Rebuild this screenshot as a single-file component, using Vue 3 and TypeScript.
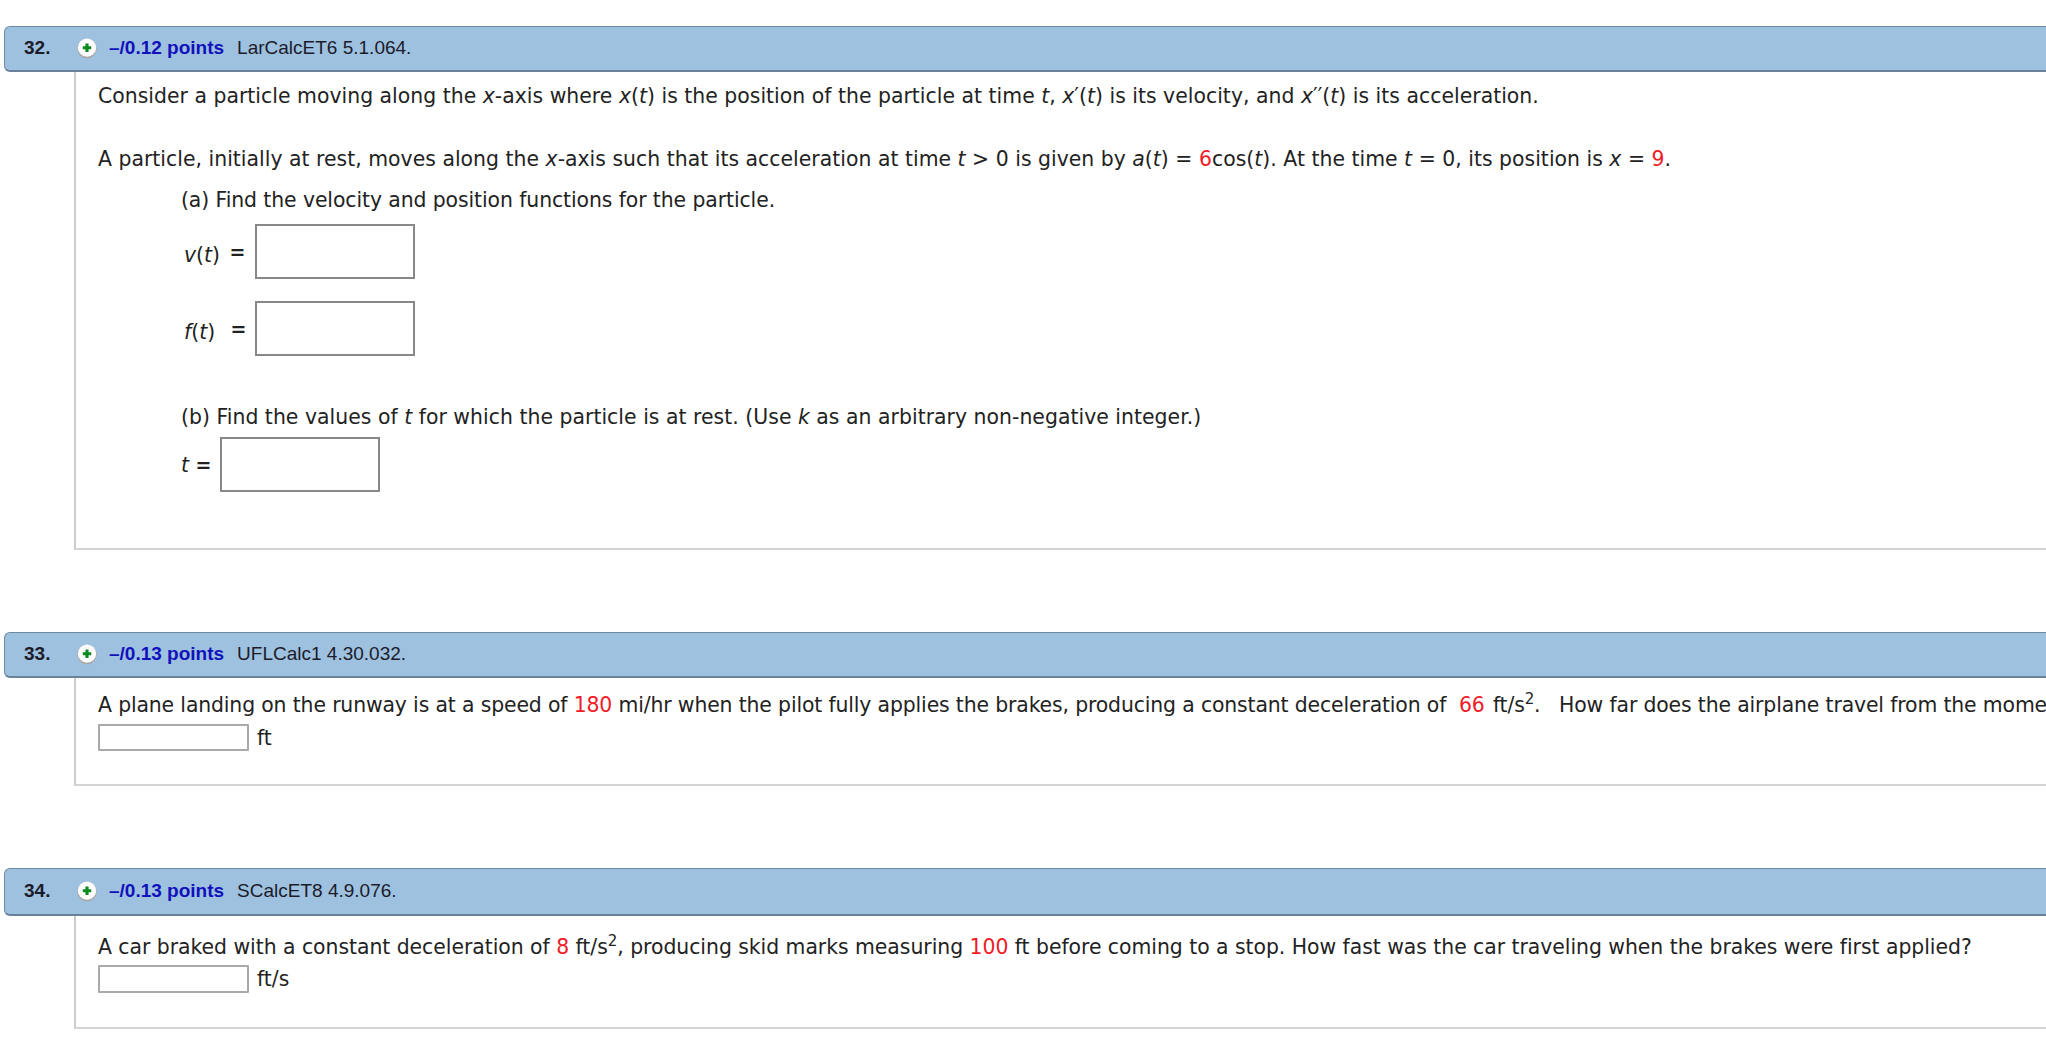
<template>
  <main class="page">
    <section class="question first">
      <header class="bar">
        <span class="num">32.</span>
        <svg class="plus" viewBox="0 0 24 24" aria-hidden="true">
          <circle cx="12" cy="12.6" r="10.6" fill="#a9a9a9" />
          <circle cx="12" cy="11.6" r="10" fill="#fdfdfd" />
          <path d="M12 7v9.4M7.4 11.7h9.2" stroke="#0d8a1f" stroke-width="3.4" fill="none" />
        </svg>
        <span class="pts">–/0.12 points</span>
        <span class="ref">LarCalcET6 5.1.064.</span>
      </header>
      <div class="body body-32">
        <p class="line first-line">Consider a particle moving along the <i>x</i>-axis where <i>x</i>(<i>t</i>) is the position of the particle at time <i>t</i>, <i>x</i>′(<i>t</i>) is its velocity, and <i>x</i>′′(<i>t</i>) is its acceleration.</p>
        <p class="line second">A particle, initially at rest, moves along the <i>x</i>-axis such that its acceleration at time <i>t</i> &gt; 0 is given by <i>a</i>(<i>t</i>) = <b class="red">6</b>cos(<i>t</i>). At the time <i>t</i> = 0, its position is <i>x</i> = <b class="red">9</b>.</p>
        <div class="part">
          <p class="line part-a">(a) Find the velocity and position functions for the particle.</p>
          <div class="answer v-row">
            <span class="label"><i>v</i>(<i>t</i>) <span class="eq">=</span></span>
            <input class="box" type="text" />
          </div>
          <div class="answer f-row">
            <span class="label"><i>f</i>(<i>t</i>) <span class="eq f-eq">=</span></span>
            <input class="box" type="text" />
          </div>
          <p class="line part-b">(b) Find the values of <i>t</i> for which the particle is at rest. (Use <i>k</i> as an arbitrary non-negative integer.)</p>
          <div class="answer t-row">
            <span class="label short"><i>t</i> <span class="eq">=</span></span>
            <input class="box" type="text" />
          </div>
        </div>
      </div>
    </section>

    <section class="question">
      <header class="bar">
        <span class="num">33.</span>
        <svg class="plus" viewBox="0 0 24 24" aria-hidden="true">
          <circle cx="12" cy="12.6" r="10.6" fill="#a9a9a9" />
          <circle cx="12" cy="11.6" r="10" fill="#fdfdfd" />
          <path d="M12 7v9.4M7.4 11.7h9.2" stroke="#0d8a1f" stroke-width="3.4" fill="none" />
        </svg>
        <span class="pts">–/0.13 points</span>
        <span class="ref">UFLCalc1 4.30.032.</span>
      </header>
      <div class="body body-33">
        <p class="line plane">A plane landing on the runway is at a speed of <b class="red">180</b> mi/hr when the pilot fully applies the brakes, producing a constant deceleration of &nbsp;<b class="red">66</b> <span class="unit">ft/s<sup>2</sup></span>. &nbsp;<span class="how">How far does the airplane travel from the moment</span></p>
        <div class="inline-answer">
          <input class="small" type="text" />
          <span>ft</span>
        </div>
      </div>
    </section>

    <section class="question last">
      <header class="bar tall">
        <span class="num">34.</span>
        <svg class="plus" viewBox="0 0 24 24" aria-hidden="true">
          <circle cx="12" cy="12.6" r="10.6" fill="#a9a9a9" />
          <circle cx="12" cy="11.6" r="10" fill="#fdfdfd" />
          <path d="M12 7v9.4M7.4 11.7h9.2" stroke="#0d8a1f" stroke-width="3.4" fill="none" />
        </svg>
        <span class="pts">–/0.13 points</span>
        <span class="ref">SCalcET8 4.9.076.</span>
      </header>
      <div class="body body-34">
        <p class="line car">A car braked with a constant deceleration of <b class="red">8</b> ft/s<sup>2</sup>, producing skid marks measuring <b class="red">100</b> ft before coming to a stop. How fast was the car traveling when the brakes were first applied?</p>
        <div class="inline-answer tall-input">
          <input class="small" type="text" />
          <span>ft/s</span>
        </div>
      </div>
    </section>
  </main>
</template>

<script setup lang="ts">
</script>

<style>
html,
body {
  margin: 0;
  background: #fff;
  overflow: hidden;
}
</style>

<style scoped>
.page {
  width: 2046px;
  height: 1057px;
  overflow: hidden;
  background: #fff;
  color: #222;
  font-family: "DejaVu Sans", Verdana, sans-serif;
  font-size: 20.4px;
}

.question {
  margin-top: 82px;
  margin-left: 4px;
  width: 2100px;
}
.question.first {
  margin-top: 26px;
}

/* barra azul */
.bar {
  height: 42px;
  padding-bottom: 1px;
  display: flex;
  align-items: center;
  background: #9ec1df;
  border: 1px solid #6f8aa3;
  border-bottom: 2px solid #6a8299;
  border-right: 0;
  border-radius: 6px 0 0 6px;
  font-family: "Liberation Sans", Arial, sans-serif;
  font-size: 19px;
  color: #1b1b2a;
}
.bar.tall {
  height: 44px;
}
.num {
  width: 71px;
  padding-left: 19px;
  box-sizing: border-box;
  font-weight: 700;
}
.plus {
  width: 22px;
  height: 22px;
  margin-right: 11px;
  flex: none;
}
.pts {
  color: #1111bb;
  font-weight: 700;
  margin-right: 13px;
}

/* cuerpo */
.body {
  margin-left: 70px;
  border-left: 2px solid #ccc;
  border-bottom: 2px solid #d4d4d4;
  padding-left: 22px;
}
.body-32 {
  padding-top: 11px;
  padding-bottom: 56px;
}
.body-33 {
  padding-top: 14px;
  padding-bottom: 33px;
}
.body-34 {
  padding-top: 18px;
  padding-bottom: 34px;
}

.line {
  margin: 0;
  line-height: 26px;
  white-space: nowrap;
}
.first-line {
  letter-spacing: 0.02px;
}
.second {
  margin-top: 37px;
  letter-spacing: 0.02px;
}
.plane {
  letter-spacing: -0.14px;
}
.unit {
  margin-left: 2px;
}
.how {
  margin-left: 6px;
}
.car {
  letter-spacing: -0.035px;
}
.red {
  color: #f01c28;
  font-weight: 400;
}
sup {
  font-size: 15px;
  line-height: 0;
}

.part {
  margin-left: 83px;
}
.part-a {
  margin-top: 15px;
  letter-spacing: -0.09px;
}
.part-b {
  margin-top: 48px;
  letter-spacing: 0.03px;
}
.answer {
  display: flex;
  align-items: center;
}
.v-row {
  margin-top: 11px;
}
.f-row {
  margin-top: 22px;
}
.t-row {
  margin-top: 7px;
}
.label {
  width: 74px;
  box-sizing: border-box;
  padding-left: 3px;
  padding-top: 4px;
  white-space: nowrap;
}
.label.short {
  width: 39px;
  padding-left: 0;
  padding-top: 0;
}
.eq {
  font-size: 19px;
  font-weight: 700;
  margin-left: 3px;
  vertical-align: 3px;
}
.f-eq {
  margin-left: 9px;
}
.short .eq {
  margin-left: 0;
  vertical-align: 0;
}
.box {
  width: 160px;
  height: 55px;
  box-sizing: border-box;
  border: 2px solid #888;
  background: #fff;
  padding: 0;
  border-radius: 0;
}
.inline-answer {
  display: flex;
  align-items: center;
  gap: 8px;
  margin-top: 6px;
}
.small {
  width: 151px;
  height: 27px;
  box-sizing: border-box;
  border: 2px solid #aaa;
  border-radius: 1px;
  background: #fff;
  padding: 0;
}
.tall-input {
  margin-top: 5px;
}
.tall-input .small {
  height: 28px;
}
</style>
